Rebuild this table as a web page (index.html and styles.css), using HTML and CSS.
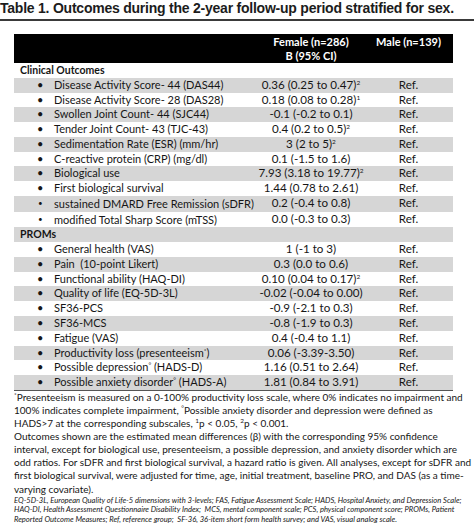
FILE: index.html
```html
<!DOCTYPE html>
<html lang="en">
<head>
<meta charset="utf-8">
<title>Table 1</title>
<link rel="stylesheet" href="styles.css">
</head>
<body>
<h1 class="title">Table 1. Outcomes during the 2-year follow-up period stratified for sex.</h1>
<div class="rule"></div>
<table class="outcomes">
  <colgroup><col class="c-label"><col class="c-female"><col class="c-male"></colgroup>
  <thead>
    <tr><th></th><th>Female (n=286)<br>B (95% CI)</th><th>Male (n=139)</th></tr>
  </thead>
  <tbody>
    <tr class="section"><td class="label">Clinical Outcomes</td><td></td><td></td></tr>
    <tr class="shade"><td class="item"><span class="bullet">•</span>Disease Activity Score- 44 (DAS44)</td><td class="val">0.36 (0.25 to 0.47)<sup>2</sup></td><td class="val">Ref.</td></tr>
    <tr><td class="item"><span class="bullet">•</span>Disease Activity Score- 28 (DAS28)</td><td class="val">0.18 (0.08 to 0.28)<sup>1</sup></td><td class="val">Ref.</td></tr>
    <tr class="shade"><td class="item"><span class="bullet">•</span>Swollen Joint Count- 44 (SJC44)</td><td class="val">-0.1 (-0.2 to 0.1)</td><td class="val">Ref.</td></tr>
    <tr><td class="item"><span class="bullet">•</span>Tender Joint Count- 43 (TJC-43)</td><td class="val">0.4 (0.2 to 0.5)<sup>2</sup></td><td class="val">Ref.</td></tr>
    <tr class="shade"><td class="item"><span class="bullet">•</span>Sedimentation Rate (ESR) (mm/hr)</td><td class="val">3 (2 to 5)<sup>2</sup></td><td class="val">Ref.</td></tr>
    <tr><td class="item"><span class="bullet">•</span>C-reactive protein (CRP) (mg/dl)</td><td class="val">0.1 (-1.5 to 1.6)</td><td class="val">Ref.</td></tr>
    <tr class="shade"><td class="item"><span class="bullet">•</span>Biological use</td><td class="val">7.93 (3.18 to 19.77)<sup>2</sup></td><td class="val">Ref.</td></tr>
    <tr><td class="item"><span class="bullet">•</span>First biological survival</td><td class="val">1.44 (0.78 to 2.61)</td><td class="val">Ref.</td></tr>
    <tr class="shade"><td class="item"><span class="bullet small">•</span>sustained DMARD Free Remission (sDFR)</td><td class="val">0.2 (-0.4 to 0.8)</td><td class="val">Ref.</td></tr>
    <tr><td class="item"><span class="bullet small">•</span>modified Total Sharp Score (mTSS)</td><td class="val">0.0 (-0.3 to 0.3)</td><td class="val">Ref.</td></tr>
    <tr class="shade section"><td class="label">PROMs</td><td></td><td></td></tr>
    <tr><td class="item"><span class="bullet">•</span>General health (VAS)</td><td class="val">1 (-1 to 3)</td><td class="val">Ref.</td></tr>
    <tr class="shade"><td class="item"><span class="bullet">•</span>Pain&nbsp; (10-point Likert)</td><td class="val">0.3 (0.0 to 0.6)</td><td class="val">Ref.</td></tr>
    <tr><td class="item"><span class="bullet">•</span>Functional ability (HAQ-DI)</td><td class="val">0.10 (0.04 to 0.17)<sup>2</sup></td><td class="val">Ref.</td></tr>
    <tr class="shade"><td class="item"><span class="bullet">•</span>Quality of life (EQ-5D-3L)</td><td class="val">-0.02 (-0.04 to 0.00)</td><td class="val">Ref.</td></tr>
    <tr><td class="item"><span class="bullet">•</span>SF36-PCS</td><td class="val">-0.9 (-2.1 to 0.3)</td><td class="val">Ref.</td></tr>
    <tr class="shade"><td class="item"><span class="bullet">•</span>SF36-MCS</td><td class="val">-0.8 (-1.9 to 0.3)</td><td class="val">Ref.</td></tr>
    <tr><td class="item"><span class="bullet">•</span>Fatigue (VAS)</td><td class="val">0.4 (-0.4 to 1.1)</td><td class="val">Ref.</td></tr>
    <tr class="shade"><td class="item"><span class="bullet">•</span>Productivity loss (presenteeism<sup>*</sup>)</td><td class="val">0.06 (-3.39-3.50)</td><td class="val">Ref.</td></tr>
    <tr><td class="item"><span class="bullet">•</span>Possible depression<sup>°</sup> (HADS-D)</td><td class="val">1.16 (0.51 to 2.64)</td><td class="val">Ref.</td></tr>
    <tr class="shade last"><td class="item"><span class="bullet">•</span>Possible anxiety disorder<sup>°</sup> (HADS-A)</td><td class="val">1.81 (0.84 to 3.91)</td><td class="val">Ref.</td></tr>
  </tbody>
</table>
<div class="notes">
  <p class="note"><sup>*</sup>Presenteeism is measured on a 0-100% productivity loss scale, where 0% indicates no impairment and<br>100% indicates complete impairment, <sup>°</sup>Possible anxiety disorder and depression were defined as<br>HADS&gt;7 at the corresponding subscales, <sup>1</sup>p &lt; 0.05, <sup>2</sup>p &lt; 0.001.</p>
  <p class="note">Outcomes shown are the estimated mean differences (β) with the corresponding 95% confidence<br>interval, except for biological use, presenteeism, a possible depression, and anxiety disorder which are<br>odd ratios. For sDFR and first biological survival, a hazard ratio is given. All analyses, except for sDFR and<br>first biological survival, were adjusted for time, age, initial treatment, baseline PRO, and DAS (as a time-<br>varying covariate).</p>
  <p class="abbr">EQ-5D-3L, European Quality of Life-5 dimensions with 3-levels; FAS, Fatigue Assessment Scale; HADS, Hospital Anxiety, and Depression Scale;<br>HAQ-DI, Health Assessment Questionnaire Disability Index;&nbsp; MCS, mental component scale; PCS, physical component score; PROMs, Patient<br>Reported Outcome Measures; Ref, reference group;&nbsp; SF-36, 36-item short form health survey; and VAS, visual analog scale.</p>
</div>
</body>
</html>
```

FILE: styles.css
```css
html, body {
  margin: 0;
  padding: 0;
  background: #ffffff;
  overflow: hidden;
}

body {
  width: 474px;
  height: 523px;
  font-family: Lato, "Liberation Sans", sans-serif;
  color: #161616;
}

.title {
  margin: 0;
  padding: 0;
  font-family: "Liberation Sans", Arial, sans-serif;
  font-weight: 700;
  font-size: 14px;
  line-height: 16px;
  letter-spacing: -0.23px;
  white-space: nowrap;
  color: #1c1c1c;
}

.rule {
  margin-top: 3px;
  height: 2px;
  background: #3a3a3a;
}

.outcomes {
  margin: 13px 0 0 14px;
  width: 439px;
  border-collapse: collapse;
  table-layout: fixed;
  font-size: 11px;
}

.c-label { width: 244px; }
.c-female { width: 106px; }
.c-male { width: 89px; }

.outcomes th {
  background: #000000;
  color: #ffffff;
  font-weight: 700;
  font-size: 11px;
  line-height: 14px;
  padding: 1px 0 0 0;
  height: 28px;
  vertical-align: top;
  text-align: center;
}

.outcomes td {
  padding: 0;
  line-height: 14.77px;
  height: 14.77px;
  text-align: center;
  white-space: nowrap;
  vertical-align: middle;
}

.outcomes td.val {
  font-size: 11.6px;
}

.outcomes td.item,
.outcomes td.label {
  text-align: left;
}

.outcomes td.label {
  padding-left: 6px;
  font-weight: 700;
  font-size: 10.5px;
}

.outcomes tr.shade td {
  background: #d6d6d6;
}

.outcomes tr.last td {
  border-bottom: 1px solid #555555;
}

.bullet {
  display: inline-block;
  width: 40px;
  padding-left: 23px;
  box-sizing: border-box;
}

.bullet.small {
  font-size: 8px;
  vertical-align: 2px;
  padding-left: 24px;
}

sup {
  font-size: 6.5px;
  line-height: 0;
  vertical-align: 4px;
}

.notes {
  padding-left: 14px;
}

.note {
  margin: 0;
  font-size: 10px;
  line-height: 13.1px;
  white-space: nowrap;
}

.abbr {
  margin: 0;
  font-size: 7.6px;
  line-height: 9.6px;
  font-style: italic;
  white-space: nowrap;
}
```
